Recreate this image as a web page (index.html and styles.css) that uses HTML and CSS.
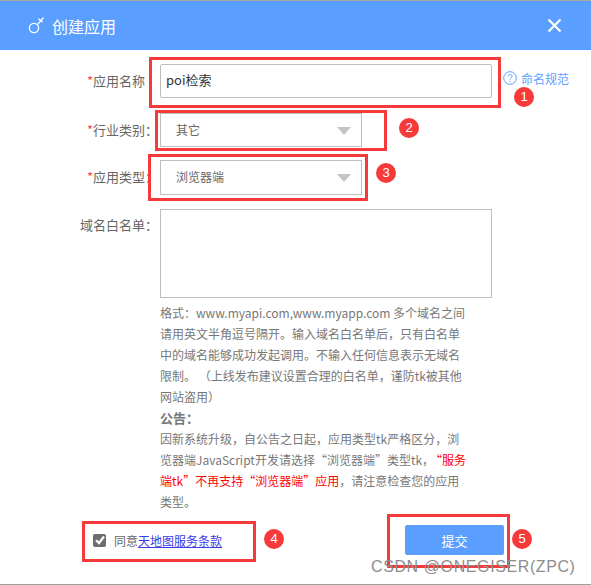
FILE: index.html
```html
<!DOCTYPE html>
<html lang="zh-CN">
<head>
<meta charset="utf-8">
<title>创建应用</title>
<link rel="stylesheet" href="styles.css">
</head>
<body>
<main class="dialog">
  <header class="head">
    <svg class="key" width="20" height="20" viewBox="0 0 20 20" fill="none" stroke="#fff" stroke-width="1.3"><circle cx="6" cy="12" r="4.6"/><path d="M9.2 8.8 15.5 1.5M10.5 2.8 14.5 6"/></svg>
    <h1 class="title">创建应用</h1>
    <svg class="close" width="15" height="15" viewBox="0 0 15 15" stroke="#fff" stroke-width="2.2"><path d="M1.5 1.5 13.5 13.5M13.5 1.5 1.5 13.5"/></svg>
  </header>
  <form class="form">
    <div class="row row-name">
      <label class="label"><i>*</i>应用名称</label>
      <div class="field field-wide">poi检索</div>
      <a class="rule"><svg width="14" height="14" viewBox="0 0 14 14" fill="none" stroke="#5a9fff"><circle cx="7" cy="7" r="6.3"/><path d="M5 5.3C5 2.8 9 2.8 9 5.3 9 6.8 7 6.8 7 8.6M7 9.8V11"/></svg>命名规范</a>
    </div>
    <div class="row row-trade">
      <label class="label"><i>*</i>行业类别&#xFF1A;</label>
      <div class="field field-select">其它<span class="arrow"></span></div>
    </div>
    <div class="row row-type">
      <label class="label"><i>*</i>应用类型&#xFF1A;</label>
      <div class="field field-select">浏览器端<span class="arrow"></span></div>
    </div>
    <div class="row row-domain">
      <label class="label">域名白名单&#xFF1A;</label>
      <div class="field field-area"></div>
    </div>
    <div class="help">
      <p>格式&#xFF1A;www.myapi.com,www.myapp.com 多个域名之间请用英文半角逗号隔开。输入域名白名单后&#xFF0C;只有白名单中的域名能够成功发起调用。不输入任何信息表示无域名限制。 &#xFF08;上线发布建议设置合理的白名单&#xFF0C;谨防tk被其他网站盗用&#xFF09;</p>
      <p class="notice">公告&#xFF1A;</p>
      <p>因新系统升级&#xFF0C;自公告之日起&#xFF0C;应用类型tk严格区分&#xFF0C;浏览器端JavaScript开发请选择“浏览器端”类型tk&#xFF0C;<span class="warn">“服务端tk”不再支持“浏览器端”应用</span>&#xFF0C;请注意检查您的应用类型。</p>
    </div>
    <div class="foot">
      <span class="check"><svg width="12" height="12" viewBox="0 0 12 12" fill="none" stroke="#fff" stroke-width="2.2"><path d="M2 6.2 5 9 10 2.5"/></svg></span>
      <span class="agree">同意<a class="terms">天地图服务条款</a></span>
      <button type="button" class="submit">提交</button>
    </div>
  </form>
  <div class="mark m1"></div><div class="mark m2"></div><div class="mark m3"></div><div class="mark m4"></div><div class="mark m5"></div>
  <span class="num n1">1</span><span class="num n2">2</span><span class="num n3">3</span><span class="num n4">4</span><span class="num n5">5</span>
  <span class="water">CSDN @ONEGISER(ZPC)</span>
</main>
</body>
</html>
```
FILE: styles.css
```css
* { box-sizing: border-box; }
html, body { margin: 0; padding: 0; }
body { width: 591px; height: 585px; overflow: hidden; background: #fff; font-family: "Noto Sans CJK SC", "Open Sans", sans-serif; color: #666; }
.dialog { position: relative; width: 591px; height: 585px; border-top: 1px solid #a8a8a8; border-bottom: 1px solid #a0a0a0; }
.head { height: 49px; background: #5a9fff; display: flex; align-items: center; padding: 0 29px 0 28px; color: #fff; }
.key { flex: none; }
.title { margin: 0 0 0 4px; font-size: 16px; font-weight: 400; flex: 1; }
.close { flex: none; }
.form { display: block; }
.row { display: flex; }
.row-name { margin-top: 14px; height: 34px; }
.row-trade { margin-top: 15px; height: 34px; }
.row-type { margin-top: 13px; height: 35px; }
.row-domain { margin-top: 14px; height: 89px; }
.label { width: 160px; padding-right: 2px; text-align: right; font-size: 13px; line-height: 33px; white-space: nowrap; }
.row-name .label { padding-right: 15px; }
.row-domain .label { line-height: 32px; }
.label i { color: #f44; font-style: normal; }
.field { border: 1px solid #bdbdbd; background: #fff; font-size: 12px; line-height: 32px; }
.field-wide { width: 332px; border-radius: 2px; padding-left: 5px; color: #333; font-size: 13px; line-height: 30px; }
.field-select { width: 202px; padding-left: 15px; position: relative; }
.arrow { position: absolute; right: 10px; top: 13px; border: 7px solid transparent; border-top: 8px solid #c4c4c4; border-bottom: 0; }
.field-area { width: 332px; }
.rule { margin-left: 11px; display: flex; align-items: center; gap: 4px; height: 28px; color: #5a9fff; font-size: 12px; white-space: nowrap; }
.help { margin: 4px 0 0 160px; width: 307px; font-size: 12px; line-height: 21px; color: #777; }
.help p { margin: 0; }
.notice { font-weight: 700; font-size: 13px; }
.warn { color: #f00; margin-left: 2px; }
.foot { display: flex; align-items: center; height: 30px; margin-top: 13px; padding-left: 93px; }
.check { width: 13px; height: 13px; border-radius: 2px; background: #6e6e6e; display: flex; align-items: center; justify-content: center; }
.agree { margin-left: 8px; font-size: 12px; color: #666; }
.terms { color: #3a3ae8; text-decoration: underline; }
.submit { margin-left: 183px; width: 99px; height: 30px; border: 0; border-radius: 2px; background: #5a9fff; color: #fff; font: 400 13px "Noto Sans CJK SC", sans-serif; }
.mark { position: absolute; border: 3px solid #f63a3a; }
.m1 { left: 149px; top: 56px; width: 352px; height: 51px; }
.m2 { left: 155px; top: 109px; width: 232px; height: 41px; }
.m3 { left: 148px; top: 153px; width: 220px; height: 47px; }
.m4 { left: 82px; top: 520px; width: 174px; height: 41px; }
.m5 { left: 387px; top: 513px; width: 123px; height: 54px; }
.num { position: absolute; width: 20px; height: 20px; border-radius: 50%; background: #f63a3a; color: #fff; font: 400 13px/20px "Liberation Sans", sans-serif; text-align: center; }
.n1 { left: 514px; top: 86px; }
.n2 { left: 399px; top: 117px; }
.n3 { left: 376px; top: 162px; }
.n4 { left: 264px; top: 528px; }
.n5 { left: 512px; top: 528px; }
.water { position: absolute; left: 371px; top: 556px; font: 400 16px/20px "Liberation Sans", sans-serif; letter-spacing: 0.6px; color: #8d8d8d; white-space: nowrap; }
```
